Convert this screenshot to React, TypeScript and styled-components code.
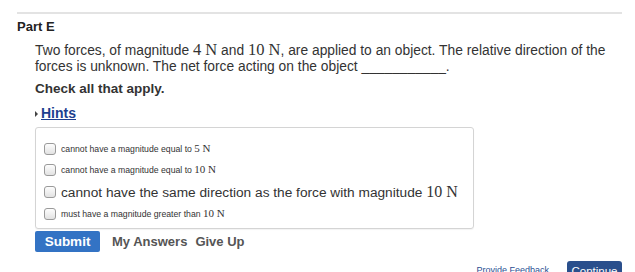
import {FC} from 'react'
import styled, {createGlobalStyle} from 'styled-components'

const GlobalStyle = createGlobalStyle`
  html, body {
    margin: 0;
    padding: 0;
    background: #fff;
    font-family: "Liberation Sans", Arial, Helvetica, sans-serif;
    color: #333;
  }
`

type Size = 'small' | 'large'

const Options: {label: string, math: string, size: Size}[] = [
  {label: 'cannot have a magnitude equal to', math: '5 N', size: 'small'},
  {label: 'cannot have a magnitude equal to', math: '10 N', size: 'small'},
  {label: 'cannot have the same direction as the force with magnitude', math: '10 N', size: 'large'},
  {label: 'must have a magnitude greater than', math: '10 N', size: 'small'},
]

const App: FC = () => {
  return (
    <>
      <GlobalStyle/>
      <Page>
        <Title>Part E</Title>
        <Body>
          <Question>
            Two forces, of magnitude <Math>4 N</Math> and <Math>10 N</Math>, are applied to an object. The relative direction of the
            forces is unknown. The net force acting on the object ___________.
          </Question>
          <Instruction>Check all that apply.</Instruction>
          <HintsRow>
            <Arrow/>
            <HintsLink>Hints</HintsLink>
          </HintsRow>
          <OptionBox>
            {Options.map((option, index) => (
              <OptionRow key={index} size={option.size}>
                <Checkbox/>
                <OptionText size={option.size}>
                  {option.label} <OptionMath size={option.size}>{option.math}</OptionMath>
                </OptionText>
              </OptionRow>
            ))}
          </OptionBox>
          <Actions>
            <SubmitButton>Submit</SubmitButton>
            <ActionLink>My Answers</ActionLink>
            <ActionLink>Give Up</ActionLink>
          </Actions>
        </Body>
        <Footer>
          <FeedbackLink>Provide Feedback</FeedbackLink>
          <ContinueButton>Continue</ContinueButton>
        </Footer>
      </Page>
    </>
  )
}

export default App

const Page = styled.div`
  width: 605px;
  margin: 12px 0 0 17px;
  border-top: 2px solid #e3e3e3;
`

const Title = styled.h2`
  margin: 5px 0 0;
  font-size: 13px;
  line-height: 16px;
  font-weight: bold;
  color: #222;
`

const Body = styled.div`
  padding-left: 18px;
`

const Question = styled.p`
  margin: 7px 0 0;
  font-size: 13.8px;
  line-height: 16px;
  color: #333;
`

const Math = styled.span`
  font-family: "Liberation Serif", "Times New Roman", serif;
  font-size: 16.5px;
  line-height: 1;
  color: #333;
`

const Instruction = styled.p`
  margin: 6px 0 0;
  font-size: 13.5px;
  line-height: 16px;
  font-weight: bold;
  color: #333;
`

const HintsRow = styled.div`
  display: flex;
  align-items: center;
  gap: 3px;
  margin-top: 8px;
  height: 16px;
`

const Arrow = styled.span`
  width: 0;
  height: 0;
  border-top: 3px solid transparent;
  border-bottom: 3px solid transparent;
  border-left: 3px solid #444;
  margin-top: 2px;
`

const HintsLink = styled.a`
  font-size: 14px;
  font-weight: bold;
  color: #1d3f8f;
  text-decoration: underline;
  cursor: pointer;
`

const OptionBox = styled.div`
  margin-top: 6px;
  width: 439px;
  border: 1px solid #d4d4d4;
  border-radius: 3px;
  padding: 10px 0 4px 8px;
  box-sizing: border-box;
  box-shadow: 0 1px 1px rgba(0, 0, 0, 0.05);
`

const OptionRow = styled.label<{size: Size}>`
  display: flex;
  align-items: center;
  gap: 5px;
  height: ${p => p.size === 'large' ? '23px' : '21px'};
`

const Checkbox = styled.span`
  width: 10px;
  height: 10px;
  border: 1px solid #9a9a9a;
  border-radius: 3px;
  background: linear-gradient(#fdfdfd, #e2e2e2);
  flex-shrink: 0;
`

const OptionText = styled.span<{size: Size}>`
  font-size: ${p => p.size === 'large' ? '13.7px' : '8.7px'};
  line-height: 1;
  white-space: nowrap;
  color: #333;
`

const OptionMath = styled.span<{size: Size}>`
  font-family: "Liberation Serif", "Times New Roman", serif;
  font-size: ${p => p.size === 'large' ? '16px' : '11px'};
`

const Actions = styled.div`
  display: flex;
  align-items: center;
  margin-top: 2px;
`

const SubmitButton = styled.button`
  height: 21px;
  width: 65px;
  padding: 0;
  border: none;
  border-radius: 2px;
  background: #3373c4;
  color: #fff;
  font-family: inherit;
  font-size: 13.5px;
  font-weight: bold;
  cursor: pointer;
  margin-right: 12px;
`

const ActionLink = styled.a`
  font-size: 13px;
  font-weight: bold;
  color: #555;
  margin-right: 8px;
  cursor: pointer;
`

const Footer = styled.div`
  display: flex;
  justify-content: flex-end;
  align-items: flex-start;
  gap: 18px;
  margin-top: 9px;
`

const FeedbackLink = styled.a`
  font-size: 9px;
  color: #2b4f93;
  margin-top: 4px;
  cursor: pointer;
`

const ContinueButton = styled.button`
  height: 20px;
  width: 55px;
  padding: 0;
  border: none;
  border-radius: 3px;
  background: #2a4f8c;
  color: #fff;
  font-family: inherit;
  font-size: 11.5px;
  cursor: pointer;
`
